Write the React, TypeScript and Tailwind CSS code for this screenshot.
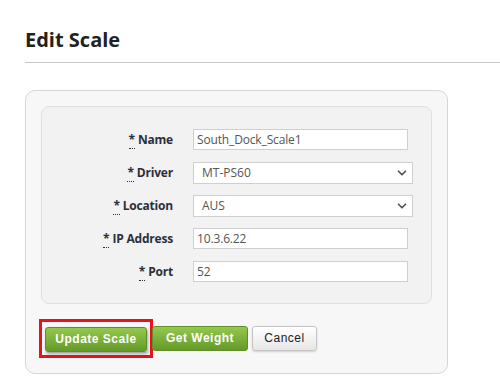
import { ChevronDown } from "lucide-react";

const fields = [
  { label: "Name", value: "South_Dock_Scale1", type: "text" },
  { label: "Driver", value: "MT-PS60", type: "select" },
  { label: "Location", value: "AUS", type: "select" },
  { label: "IP Address", value: "10.3.6.22", type: "text" },
  { label: "Port", value: "52", type: "text" },
];

function Field({ label, value, type }: { label: string; value: string; type: string }) {
  return (
    <div className="flex h-[33px] items-center">
      <label className="w-[126px] pr-[20px] text-right text-[12px] font-bold tracking-[-0.2px] text-[#2b2f3a]">
        <abbr className="mr-[3px] border-b border-dotted border-[#2b2f3a] no-underline" title="required">
          *
        </abbr>
        {label}
      </label>
      {type === "select" ? (
        <div className="flex h-[22px] w-[220px] items-center justify-between border border-[#cfcfcf] bg-white pl-[8px] pr-[3px] text-[12px] text-[#555]">
          <span>{value}</span>
          <ChevronDown size={14} strokeWidth={3} className="text-[#555]" />
        </div>
      ) : (
        <div className="flex h-[21px] w-[215px] items-center border border-[#cfcfcf] bg-white pl-[3px] text-[12px] tracking-[-0.15px] text-[#555]">
          {value}
        </div>
      )}
    </div>
  );
}

export default function App() {
  return (
    <div className="h-[392px] w-[500px] bg-white pl-[25px] pt-[26px] font-['Open_Sans',sans-serif]">
      <h1 className="text-[20px] font-bold leading-[28px] text-[#222]">Edit Scale</h1>
      <div className="mt-[8px] h-px bg-[#c6c6c6]" />

      <div className="mt-[27px] w-[423px] rounded-[10px] border border-[#d6d6d6] bg-[#f7f7f7] px-[15px] pb-[15px] pt-[15px]">
        <div className="rounded-[8px] border border-[#e0e0e0] bg-[#f2f2f2] pb-[15px] pl-[25px] pt-[16px]">
          {fields.map((f) => (
            <Field key={f.label} {...f} />
          ))}
        </div>

        <div className="mt-[15px] flex items-center gap-[4px]">
          <div className="-ml-[2px] border-[3px] border-[#e8121b] p-[3px]">
            <button className="h-[25px] w-[102px] rounded-[3px] border border-[#5f8f26] bg-gradient-to-b from-[#94c84e] to-[#649a28] font-['Liberation_Sans',sans-serif] text-[12px] font-bold tracking-[0.5px] text-white shadow-[1px_2px_3px_rgba(0,0,0,0.35)]">
              Update Scale
            </button>
          </div>
          <button className="-ml-[5px] h-[25px] w-[96px] rounded-[3px] border border-[#5f8f26] bg-gradient-to-b from-[#94c84e] to-[#649a28] font-['Liberation_Sans',sans-serif] text-[12px] font-bold tracking-[0.5px] text-white">
            Get Weight
          </button>
          <button className="h-[25px] w-[65px] rounded-[3px] border border-[#c4c4c4] bg-gradient-to-b from-white to-[#e6e6e6] font-['Liberation_Sans',sans-serif] text-[12px] tracking-[0.5px] text-[#222] shadow-[0_1px_2px_rgba(0,0,0,0.15)]">
            Cancel
          </button>
        </div>
      </div>
    </div>
  );
}
